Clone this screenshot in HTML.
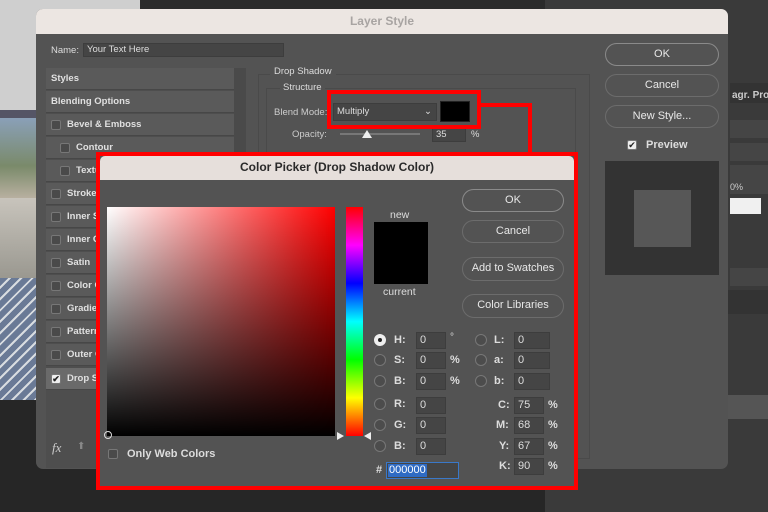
<!DOCTYPE html>
<html><head><meta charset="utf-8"><style>
*{margin:0;padding:0;box-sizing:border-box}
body{width:768px;height:512px;overflow:hidden;position:relative;background:#262626;font-family:"Liberation Sans",sans-serif;color:#ddd;font-size:10px}
div,span{position:absolute;white-space:nowrap}
.row{left:46px;width:188px;height:22px;background:#5a5a5a;border-bottom:1px solid #474747;font-weight:bold;font-size:9.5px;color:#e0e0e0;line-height:22px}
.cb{width:10px;height:10px;border:1px solid #777;background:#4a4a4a;border-radius:2px}
.btn{border:1.5px solid #8a8a8a;border-radius:12px;text-align:center;color:#e8e8e8;font-size:11px}
.inp{background:#454545;border:1px solid #3d3d3d;color:#ddd;font-size:11px;padding-left:3px;height:17px;line-height:15px}
.rad{width:12px;height:12px;border-radius:50%;border:1px solid #777;background:#4c4c4c}
.lb{font-size:11px;font-weight:bold;color:#ddd}
.red{border:4px solid #f00}
</style></head><body>
<div style="left:0;top:0;width:140px;height:120px;background:#cfcfcf"></div>
<div style="left:140px;top:0;width:405px;height:10px;background:#2b2b2b"></div>
<div style="left:545px;top:0;width:223px;height:512px;background:#3a3a3a"></div>
<div style="left:0;top:110px;width:36px;height:8px;background:#556"></div>
<div style="left:0;top:118px;width:36px;height:80px;background:linear-gradient(#8aa0b8,#7a8a6a 60%,#b8b0a0)"></div>
<div style="left:0;top:198px;width:36px;height:80px;background:linear-gradient(#c8c4bc,#9a9890)"></div>
<div style="left:0;top:278px;width:36px;height:122px;background:repeating-linear-gradient(135deg,#6a7a96 0 6px,#d8dce0 6px 8px)"></div>
<div style="left:0;top:400px;width:36px;height:112px;background:#262626"></div>
<div style="left:730px;top:83px;width:38px;height:20px;background:#333"></div>
<div style="left:732px;top:90px;color:#ccc;font-size:10px;font-weight:bold">agr. Pro</div>
<div style="left:730px;top:120px;width:38px;height:18px;background:#454545"></div>
<div style="left:730px;top:143px;width:38px;height:18px;background:#454545"></div>
<div style="left:730px;top:165px;width:38px;height:18px;background:#454545"></div>
<div style="left:730px;top:182px;width:38px;height:12px;background:#454545;color:#ccc;font-size:9px">0%</div>
<div style="left:730px;top:198px;width:31px;height:16px;background:#f0f0f0"></div>
<div style="left:730px;top:268px;width:38px;height:18px;background:#454545"></div>
<div style="left:728px;top:290px;width:40px;height:24px;background:#333"></div>
<div style="left:728px;top:395px;width:40px;height:24px;background:#555"></div>
<div style="left:36px;top:9px;width:692px;height:460px;background:#535353;border-radius:7px;overflow:hidden">
 <div style="left:0;top:0;width:692px;height:25px;background:#ece6e2;text-align:center;line-height:24px;font-size:12px;font-weight:bold;color:#a8a4a2">Layer Style</div>
</div>
<div style="left:51px;top:45px;font-size:9.5px;color:#ddd">Name:</div>
<div class="inp" style="left:83px;top:43px;width:201px;height:14px;font-size:9.5px;line-height:12px">Your Text Here</div>
<div style="left:46px;top:68px;width:200px;height:400px;background:#4e4e4e"></div>
<div style="left:234px;top:68px;width:12px;height:330px;background:#4a4a4a"></div>
<div class="row" style="top:68px;padding-left:5px">Styles</div>
<div class="row" style="top:91px;padding-left:5px">Blending Options</div>
<div class="row" style="top:114px"><span class="cb" style="left:5px;top:6px"></span><span style="left:21px">Bevel &amp; Emboss</span></div>
<div class="row" style="top:137px"><span class="cb" style="left:14px;top:6px"></span><span style="left:30px">Contour</span></div>
<div class="row" style="top:160px"><span class="cb" style="left:14px;top:6px"></span><span style="left:30px">Texture</span></div>
<div class="row" style="top:183px"><span class="cb" style="left:5px;top:6px"></span><span style="left:21px">Stroke</span></div>
<div class="row" style="top:206px"><span class="cb" style="left:5px;top:6px"></span><span style="left:21px">Inner Shadow</span></div>
<div class="row" style="top:229px"><span class="cb" style="left:5px;top:6px"></span><span style="left:21px">Inner Glow</span></div>
<div class="row" style="top:252px"><span class="cb" style="left:5px;top:6px"></span><span style="left:21px">Satin</span></div>
<div class="row" style="top:275px"><span class="cb" style="left:5px;top:6px"></span><span style="left:21px">Color Overlay</span></div>
<div class="row" style="top:298px"><span class="cb" style="left:5px;top:6px"></span><span style="left:21px">Gradient</span></div>
<div class="row" style="top:321px"><span class="cb" style="left:5px;top:6px"></span><span style="left:21px">Pattern</span></div>
<div class="row" style="top:344px"><span class="cb" style="left:5px;top:6px"></span><span style="left:21px">Outer Glow</span></div>
<div class="row" style="top:368px;background:#6a6a6a"><span class="cb" style="left:5px;top:6px;background:#eee;color:#222;font-size:9px;line-height:8px;text-align:center">✔</span><span style="left:21px">Drop Shadow</span></div>
<div style="left:52px;top:440px;font-style:italic;font-size:13px;color:#ccc;font-family:'Liberation Serif',serif">fx</div>
<div style="left:77px;top:441px;color:#888;font-size:10px">⬆</div>
<div style="left:258px;top:74px;width:332px;height:385px;border:1px solid #4a4a4a"></div>
<div style="left:270px;top:66px;background:#535353;padding:0 4px;font-size:9.5px;color:#ddd">Drop Shadow</div>
<div style="left:266px;top:88px;width:310px;height:300px;border:1px solid #4a4a4a"></div>
<div style="left:280px;top:82px;background:#535353;padding:0 3px;font-size:9.5px;color:#ddd">Structure</div>
<div style="left:274px;top:107px;font-size:9.5px;color:#ccc">Blend Mode:</div>
<div class="inp" style="left:333px;top:103px;width:104px;height:18px;font-size:9.5px;line-height:16px">Multiply<span style="right:4px;top:0">⌄</span></div>
<div style="left:440px;top:101px;width:30px;height:21px;background:#000;border:1px solid #222"></div>
<div style="left:292px;top:129px;font-size:9.5px;color:#ccc">Opacity:</div>
<div style="left:340px;top:133px;width:80px;height:2px;background:#777"></div>
<div style="left:362px;top:130px;width:0;height:0;border-left:5px solid transparent;border-right:5px solid transparent;border-bottom:8px solid #eee"></div>
<div class="inp" style="left:432px;top:128px;width:34px;height:14px;font-size:9.5px;line-height:12px">35</div>
<div style="left:471px;top:129px;font-size:9.5px">%</div>
<div class="red" style="left:327px;top:90px;width:154px;height:39px"></div>
<div style="left:478px;top:103px;width:54px;height:4px;background:#f00"></div>
<div style="left:528px;top:103px;width:4px;height:52px;background:#f00"></div>
<div class="btn" style="left:605px;top:43px;width:114px;height:23px;line-height:20px">OK</div>
<div class="btn" style="left:605px;top:74px;width:114px;height:23px;line-height:20px;border-color:#6c6c6c">Cancel</div>
<div class="btn" style="left:605px;top:105px;width:114px;height:23px;line-height:20px;border-color:#6c6c6c">New Style...</div>
<div class="cb" style="left:627px;top:140px;background:#eee;color:#222;font-size:9px;line-height:8px;text-align:center">✔</div>
<div style="left:646px;top:139px;font-size:11px;font-weight:bold;color:#ddd">Preview</div>
<div style="left:605px;top:161px;width:114px;height:114px;background:#333"></div>
<div style="left:634px;top:190px;width:57px;height:57px;background:#575757"></div>
<div class="red" style="left:96px;top:152px;width:482px;height:338px;background:#535353"></div>
<div style="left:100px;top:156px;width:474px;height:24px;background:#e6dfdb;border-radius:5px 5px 0 0;text-align:center;line-height:22px;font-size:12px;font-weight:bold;color:#2a2a2a">Color Picker (Drop Shadow Color)</div>
<div style="left:107px;top:207px;width:228px;height:229px;background:linear-gradient(to bottom,rgba(0,0,0,0),#000),linear-gradient(to right,#fff,#f00)"></div>
<div style="left:104px;top:431px;width:8px;height:8px;border:1.5px solid #ddd;border-radius:50%"></div>
<div style="left:346px;top:207px;width:17px;height:229px;background:linear-gradient(to bottom,#f00,#f0f,#00f,#0ff,#0f0,#ff0,#f00)"></div>
<div style="left:337px;top:432px;width:0;height:0;border-top:4px solid transparent;border-bottom:4px solid transparent;border-left:7px solid #eee"></div>
<div style="left:364px;top:432px;width:0;height:0;border-top:4px solid transparent;border-bottom:4px solid transparent;border-right:7px solid #eee"></div>
<div style="left:390px;top:209px;font-size:10.5px;color:#ddd">new</div>
<div style="left:374px;top:222px;width:54px;height:62px;background:#000"></div>
<div style="left:383px;top:286px;font-size:10.5px;color:#ddd">current</div>
<div class="btn" style="left:462px;top:189px;width:102px;height:23px;line-height:20px">OK</div>
<div class="btn" style="left:462px;top:220px;width:102px;height:23px;line-height:20px;border-color:#6c6c6c">Cancel</div>
<div class="btn" style="left:462px;top:257px;width:102px;height:24px;line-height:21px;border-color:#6c6c6c">Add to Swatches</div>
<div class="btn" style="left:462px;top:294px;width:102px;height:24px;line-height:21px;border-color:#6c6c6c">Color Libraries</div>
<div class="rad" style="left:374px;top:334px;background:#eee;border-color:#eee"><span style="left:3px;top:3px;width:4px;height:4px;border-radius:50%;background:#222"></span></div>
<div class="lb" style="left:394px;top:334px">H:</div><div class="inp" style="left:416px;top:332px;width:30px">0</div><div style="left:450px;top:332px;font-size:10px">°</div>
<div class="rad" style="left:374px;top:354px"></div>
<div class="lb" style="left:394px;top:354px">S:</div><div class="inp" style="left:416px;top:352px;width:30px">0</div><div class="lb" style="left:450px;top:354px">%</div>
<div class="rad" style="left:374px;top:375px"></div>
<div class="lb" style="left:394px;top:375px">B:</div><div class="inp" style="left:416px;top:373px;width:30px">0</div><div class="lb" style="left:450px;top:375px">%</div>
<div class="rad" style="left:374px;top:398px"></div>
<div class="lb" style="left:394px;top:398px">R:</div><div class="inp" style="left:416px;top:397px;width:30px">0</div>
<div class="rad" style="left:374px;top:419px"></div>
<div class="lb" style="left:394px;top:419px">G:</div><div class="inp" style="left:416px;top:417px;width:30px">0</div>
<div class="rad" style="left:374px;top:440px"></div>
<div class="lb" style="left:394px;top:440px">B:</div><div class="inp" style="left:416px;top:438px;width:30px">0</div>
<div class="lb" style="left:376px;top:464px">#</div>
<div class="inp" style="left:386px;top:462px;width:73px;height:17px;border:1px solid #3a78c8;padding-left:1px"><span style="left:1px;top:1px;background:#2f6bc4;color:#fff;padding:0 1px;line-height:13px">000000</span></div>
<div class="rad" style="left:475px;top:334px"></div>
<div class="lb" style="left:494px;top:334px">L:</div><div class="inp" style="left:514px;top:332px;width:36px">0</div>
<div class="rad" style="left:475px;top:354px"></div>
<div class="lb" style="left:494px;top:354px">a:</div><div class="inp" style="left:514px;top:352px;width:36px">0</div>
<div class="rad" style="left:475px;top:375px"></div>
<div class="lb" style="left:494px;top:375px">b:</div><div class="inp" style="left:514px;top:373px;width:36px">0</div>
<div class="lb" style="left:498px;top:399px">C:</div><div class="inp" style="left:514px;top:397px;width:30px">75</div><div class="lb" style="left:548px;top:399px">%</div>
<div class="lb" style="left:496px;top:419px">M:</div><div class="inp" style="left:514px;top:417px;width:30px">68</div><div class="lb" style="left:548px;top:419px">%</div>
<div class="lb" style="left:499px;top:440px">Y:</div><div class="inp" style="left:514px;top:438px;width:30px">67</div><div class="lb" style="left:548px;top:440px">%</div>
<div class="lb" style="left:499px;top:460px">K:</div><div class="inp" style="left:514px;top:458px;width:30px">90</div><div class="lb" style="left:548px;top:460px">%</div>
<div class="cb" style="left:108px;top:449px"></div>
<div style="left:127px;top:448px;font-size:11px;font-weight:bold;color:#ddd">Only Web Colors</div>
</body></html>
